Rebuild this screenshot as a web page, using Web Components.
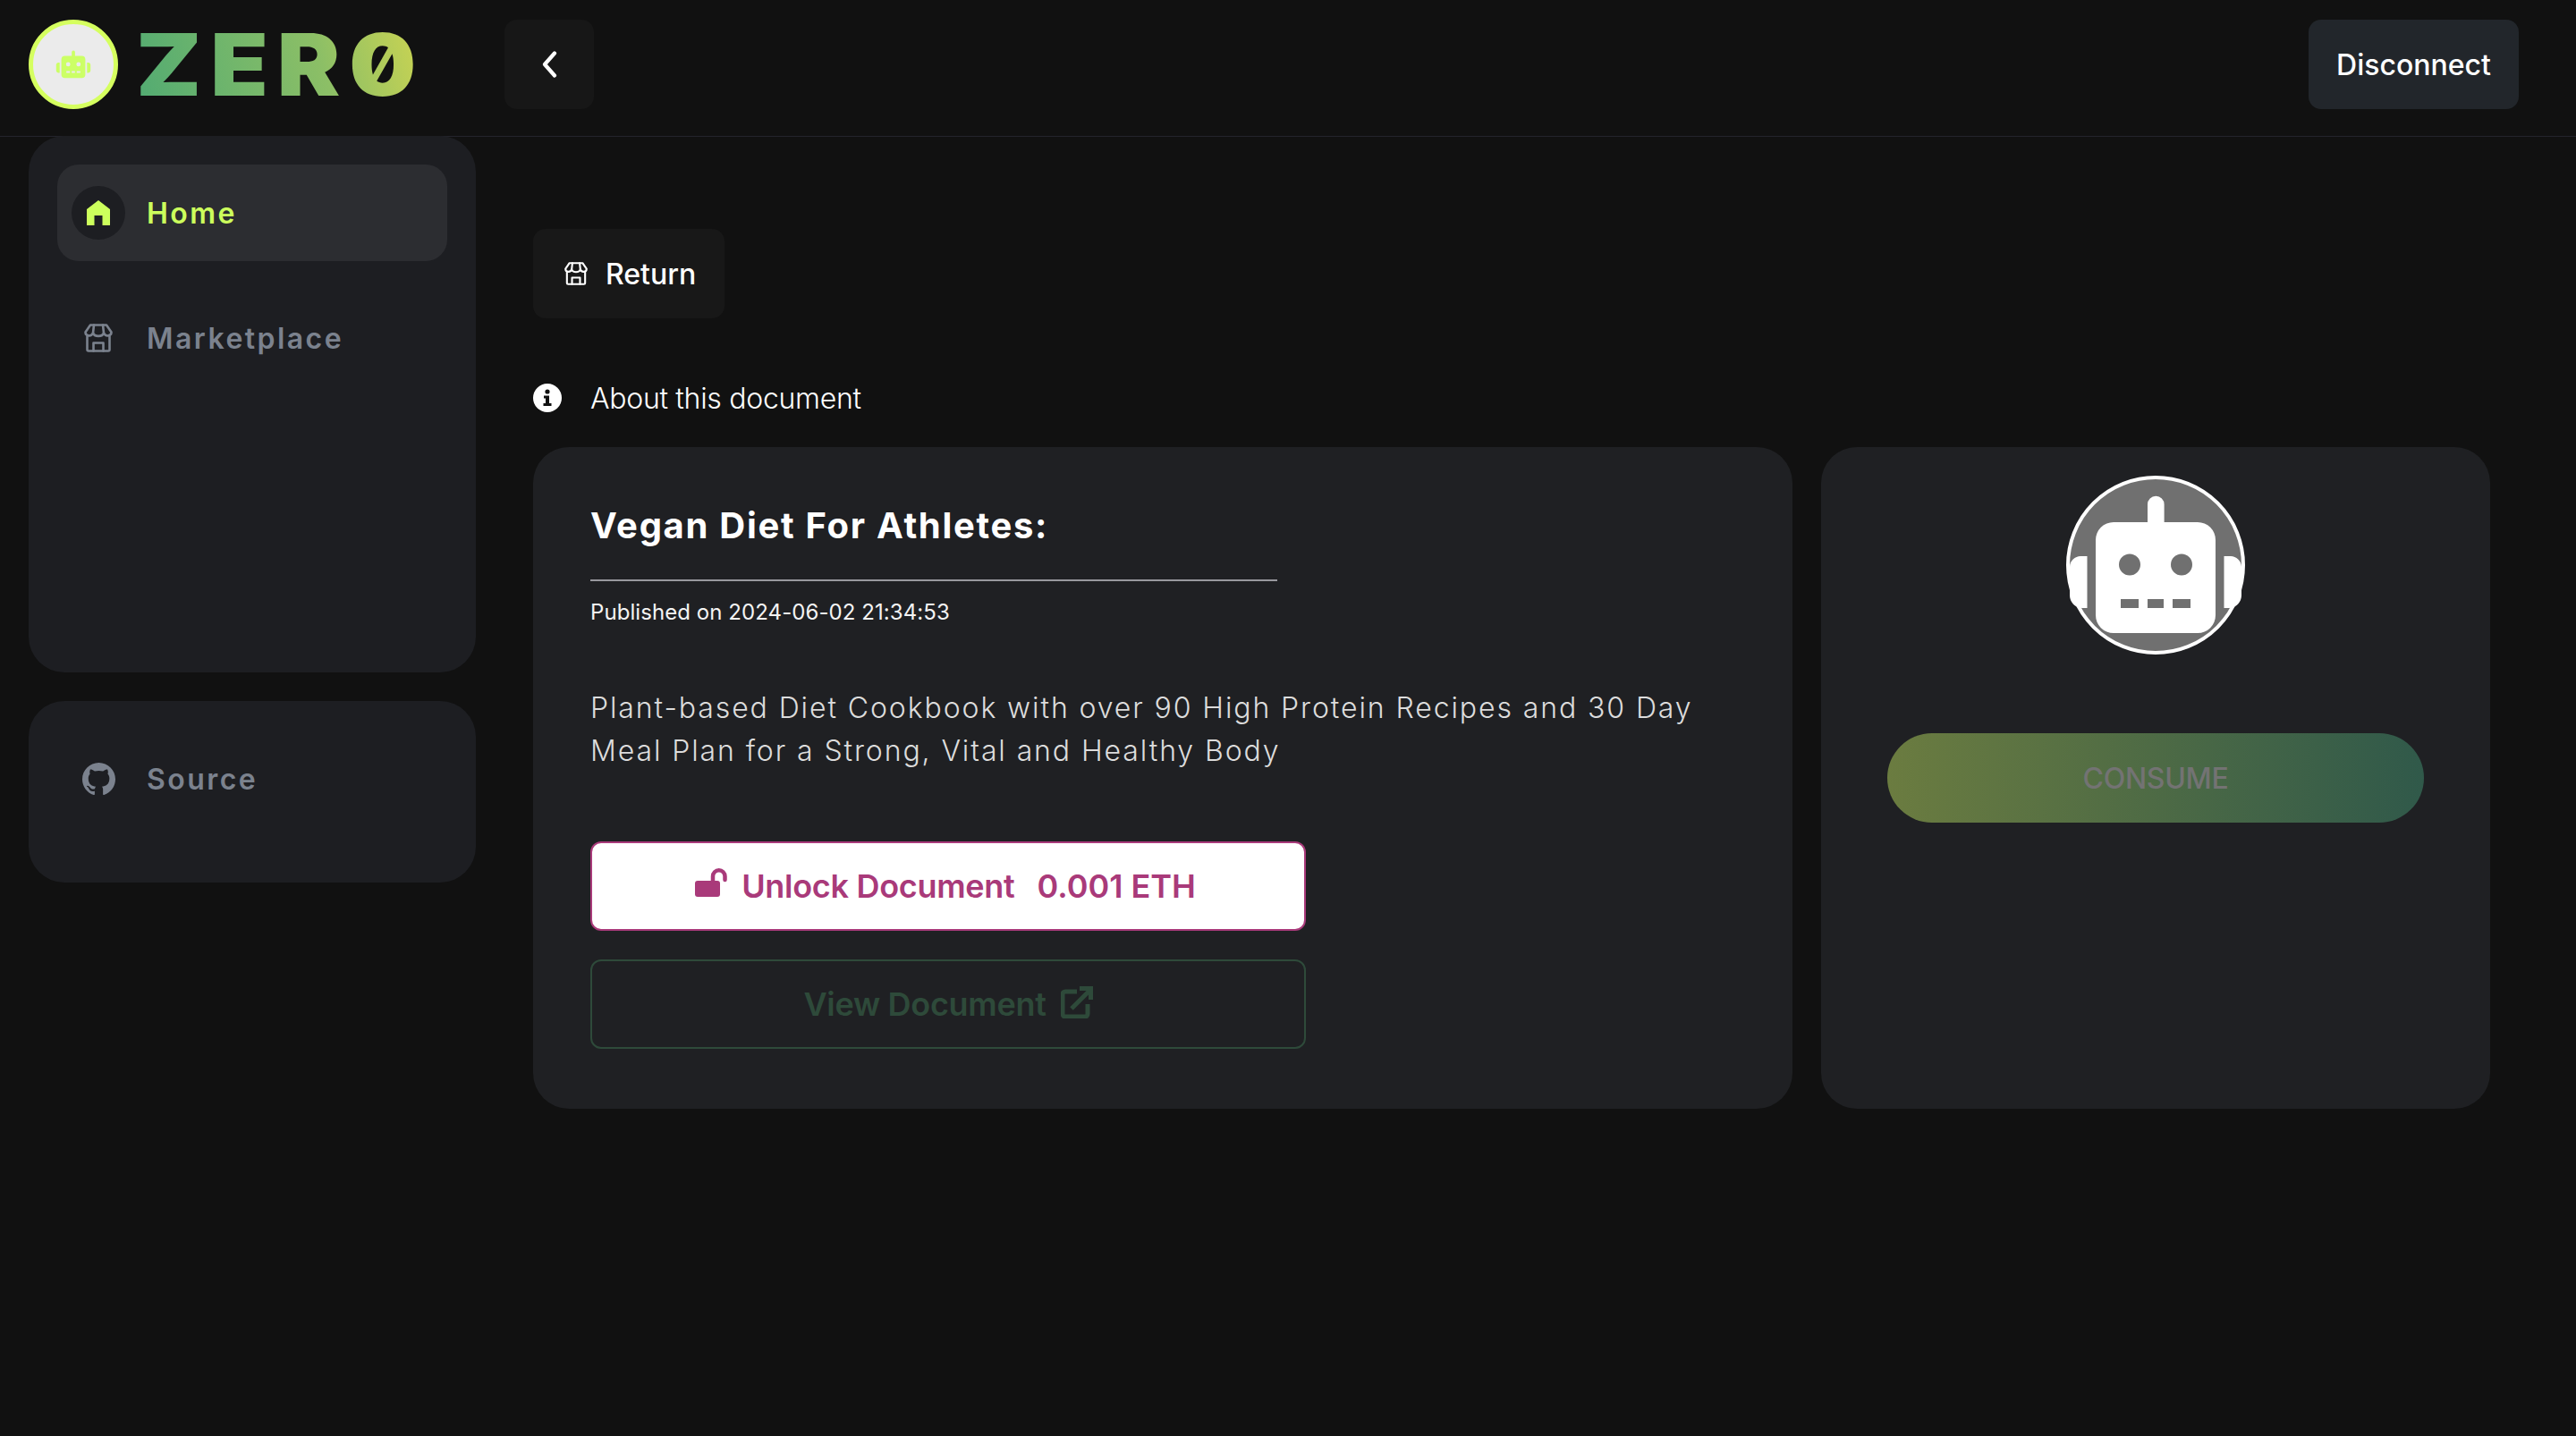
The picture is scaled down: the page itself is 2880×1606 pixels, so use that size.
<!DOCTYPE html>
<html lang="en">
<head>
<meta charset="utf-8">
<title>Zero</title>
<style>
  html, body { margin: 0; height: 100%; background: #111111; }
  body { font-family: Inter, "Noto Sans", sans-serif; color: #fff; }
</style>
</head>
<body>
<svg width="0" height="0" style="position:absolute">
  <defs>
    <symbol id="robot" viewBox="0 0 200 200">
      <path fill="currentColor" fill-rule="evenodd" d="M53 52H91V32a9.300 9.300 0 0 1 18.600 0V52H147a20 20 0 0 1 20 20V156a20 20 0 0 1-20 20H53a20 20 0 0 1-20-20V72a20 20 0 0 1 20-20ZM61 138v10H81V138ZM91 138v10H109V138ZM119 138v10H139V138Z"/>
      <circle cx="71" cy="99.500" r="12" fill="var(--eye, #707070)"/>
      <circle cx="129" cy="99.500" r="12" fill="var(--eye, #707070)"/>
      <path fill="currentColor" d="M23.500 90V148H18C10 148 4 141 4 134V102C4 95 10 90 16 90ZM176.500 90V148H182C190 148 196 141 196 134V102C196 95 190 90 184 90Z"/>
    </symbol>
    <symbol id="store" viewBox="0 0 32 32">
      <g fill="none" stroke="currentColor" stroke-width="2.600" stroke-linejoin="round" stroke-linecap="round">
        <path d="M7 1.500H25L30.500 9.500C30.500 14 24 15 22 10.500C20.500 15 11.500 15 10 10.500C8 15 1.500 14 1.500 9.500Z"/>
        <path d="M11 1.500L10 10.500M21 1.500L22 10.500"/>
        <path d="M3.500 14V29a1.500 1.500 0 0 0 1.500 1.500H27a1.500 1.500 0 0 0 1.500-1.500V14"/>
        <path d="M10.500 30.500V21.500H21.500V30.500"/>
      </g>
    </symbol>
  </defs>
</svg>

<template id="tpl-item">
  <style>
    :host { display: flex; align-items: center; height: 108px; padding-left: 16px; border-radius: 24px; color: #7b828e; font-size: 32px; font-weight: 600; letter-spacing: 2.450px; }
    :host([active]) { background: #2c2d31; color: #ccff5c; }
    .ic { width: 60px; height: 60px; border-radius: 50%; display: flex; align-items: center; justify-content: center; margin-right: 24px; flex: none; }
    :host([active]) .ic { background: #1d1e22; }
  </style>
  <span class="ic"><slot name="icon"></slot></span>
  <slot></slot>
</template>

<template id="tpl-card">
  <style>
    :host { display: block; background: #1d1e22; border-radius: 40px; padding: 32px; box-sizing: border-box; }
  </style>
  <slot></slot>
</template>

<template id="tpl-top">
  <style>
    :host { display: flex; align-items: center; border-bottom: 1px solid #24242c; padding: 0 64px 8px 32px; height: 144px; }
    .circle { width: 100px; height: 100px; box-sizing: border-box; border: 5px solid #d5ff5f; border-radius: 50%; background: #ebebeb; display: flex; align-items: center; justify-content: center; color: #ccff66; --eye: #ebebeb; }
    .word { margin-left: 20px; width: 312px; height: 72px; line-height: 72px; font-weight: 900; font-size: 96px; letter-spacing: 9px; font-feature-settings: "zero" 1; background: linear-gradient(75deg, #52ab72 0%, #8cbf66 60%, #c5d254 90%); -webkit-background-clip: text; background-clip: text; color: transparent; white-space: nowrap; flex: none; transform: scaleX(1.1); transform-origin: left center; }
    .back { margin-left: 100px; width: 100px; height: 100px; border-radius: 14px; background: #171717; display: flex; align-items: center; justify-content: center; }
    .dis { margin-left: auto; width: 235px; height: 100px; background: #22262b; border-radius: 14px; display: flex; align-items: center; justify-content: center; font-size: 32px; font-weight: 500; }
  </style>
  <span class="circle"><svg width="40" height="40"><use href="#robot"/></svg></span>
  <span class="word">ZER0</span>
  <span class="back"><svg width="18" height="30" viewBox="0 0 18 30"><path d="M15 2.500L4 15L15 27.500" fill="none" stroke="#fff" stroke-width="4.200" stroke-linecap="round" stroke-linejoin="round"/></svg></span>
  <span class="dis">Disconnect</span>
</template>

<template id="tpl-doc">
  <style>
    :host { display: block; background: #1f2023; border-radius: 40px; padding: 62px 64px 0; box-sizing: border-box; height: 740px; }
    h2 { margin: 0; font-size: 40px; line-height: 52px; font-weight: 700; letter-spacing: 1.700px; }
    hr { margin: 34px 0 0; width: 768px; border: 0; height: 2px; background: #98989e; }
    .date { margin-top: 19px; font-size: 24px; line-height: 32px; font-weight: 400; color: #f4f4f4; letter-spacing: .07px; }
    p { margin: 67px 0 0; font-size: 32px; line-height: 48px; font-weight: 300; letter-spacing: 1.900px; color: #dcdcdc; width: 1280px; }
    .btn { display: flex; align-items: center; justify-content: center; box-sizing: border-box; width: 800px; height: 100px; border-radius: 12px; font-size: 36px; font-weight: 600; letter-spacing: -.3px; }
    .unlock { margin-top: 77px; padding-right: 6px; background: #fff; border: 2px solid #a93a7a; color: #a93a7a; }
    .unlock svg { margin-right: 16px; margin-top: -8px; }
    .unlock span + span { margin-left: 25px; letter-spacing: 0; }
    .view { margin-top: 32px; border: 2px solid #2e4a3a; color: #2e4a3a; }
    .view svg { margin-left: 16px; margin-top: -4px; }
  </style>
  <h2>Vegan Diet For Athletes:</h2>
  <hr>
  <div class="date">Published on 2024-06-02 21:34:53</div>
  <p>Plant-based Diet Cookbook with over 90 High Protein Recipes and 30 Day Meal Plan for a Strong, Vital and Healthy Body</p>
  <div class="btn unlock">
    <svg width="36" height="32" viewBox="0 0 36 32"><rect x="0" y="14" width="28" height="18" rx="3" fill="currentColor"/><path d="M20 16V9a6.500 6.500 0 0 1 13.500 0V13" fill="none" stroke="currentColor" stroke-width="4.500" stroke-linecap="round"/></svg>
    <span>Unlock Document</span><span>0.001 ETH</span>
  </div>
  <div class="btn view">
    <span>View Document</span>
    <svg width="36" height="36" viewBox="0 0 36 36" fill="none" stroke="currentColor" stroke-width="5"><path d="M18 6H5a3 3 0 0 0-3 3V31a3 3 0 0 0 3 3H27a3 3 0 0 0 3-3V20"/><path d="M12 25L32 5"/><path d="M21 2.500H33.500V15"/></svg>
  </div>
</template>

<template id="tpl-agent">
  <style>
    :host { display: flex; flex-direction: column; align-items: center; background: #1f2023; border-radius: 40px; padding-top: 32px; box-sizing: border-box; height: 740px; }
    .av { width: 200px; height: 200px; box-sizing: border-box; border: 4px solid #fff; border-radius: 50%; background: #707070; color: #fff; position: relative; }
    .av svg { position: absolute; left: -4px; top: -4px; width: 200px; height: 200px; overflow: visible; }
    .go { margin-top: 88px; width: 600px; height: 100px; border-radius: 50px; background: linear-gradient(90deg, #6b7c40 0%, #30594a 100%); color: #737373; display: flex; align-items: center; justify-content: center; font-size: 32px; font-weight: 500; letter-spacing: -.3px; }
  </style>
  <div class="av"><svg><use href="#robot"/></svg></div>
  <div class="go">CONSUME</div>
</template>

<template id="tpl-app">
  <style>
    :host { display: block; min-height: 100vh; }
    .body { display: flex; margin-top: -1px; position: relative; }
    aside { width: 500px; margin-left: 32px; flex: none; display: flex; flex-direction: column; gap: 32px; }
    main { margin-left: 64px; padding-top: 104px; width: 2188px; }
    .ret { display: inline-flex; align-items: center; width: 214px; height: 100px; box-sizing: border-box; padding-left: 35px; background: #181818; border-radius: 14px; font-size: 32px; font-weight: 500; gap: 20px; }
    .about { display: flex; align-items: center; margin-top: 62px; height: 54px; font-size: 32px; font-weight: 300; gap: 32px; letter-spacing: -.3px; }
    .cards { display: flex; gap: 32px; margin-top: 28px; }
    zero-doc { width: 1408px; }
    zero-agent { width: 748px; }
    .s1 { height: 600px; }
    .s2 { height: 203px; padding-top: 33px; }
    .sp { height: 32px; }
  </style>
  <zero-top></zero-top>
  <div class="body">
    <aside>
      <zero-card class="s1">
        <zero-item active>
          <svg slot="icon" width="26" height="28" viewBox="0 0 26 28"><path fill="#ccff5c" fill-rule="evenodd" d="M13 0L26 10V28H17.500V17H8.500V28H0V10Z"/></svg>
          Home
        </zero-item>
        <div class="sp"></div>
        <zero-item>
          <svg slot="icon" width="32" height="32"><use href="#store"/></svg>
          Marketplace
        </zero-item>
      </zero-card>
      <zero-card class="s2">
        <zero-item>
          <svg slot="icon" width="37" height="37" viewBox="0 0 16 16"><path fill="currentColor" d="M8 0C3.580 0 0 3.580 0 8c0 3.540 2.290 6.530 5.470 7.590.4.070.55-.17.55-.38 0-.19-.01-.82-.01-1.490-2.010.37-2.530-.49-2.690-.94-.09-.23-.48-.94-.82-1.130-.28-.15-.68-.52-.01-.53.63-.01 1.080.58 1.230.82.72 1.210 1.870.87 2.330.66.07-.52.28-.87.51-1.070-1.780-.2-3.640-.89-3.640-3.950 0-.87.31-1.590.82-2.150-.08-.2-.36-1.020.08-2.120 0 0 .67-.21 2.200.82.64-.18 1.320-.27 2-.27.68 0 1.360.09 2 .27 1.530-1.040 2.200-.82 2.200-.82.44 1.100.16 1.920.08 2.120.51.56.82 1.270.82 2.150 0 3.070-1.870 3.750-3.650 3.950.29.25.54.73.54 1.480 0 1.070-.01 1.930-.01 2.200 0 .21.15.46.55.38A8.013 8.013 0 0016 8c0-4.420-3.580-8-8-8z"/></svg>
          Source
        </zero-item>
      </zero-card>
    </aside>
    <main>
      <div class="ret"><svg width="26" height="26"><use href="#store"/></svg>Return</div>
      <div class="about">
        <svg width="32" height="32" viewBox="0 0 32 32"><circle cx="16" cy="16" r="16" fill="#fff"/><circle cx="16" cy="9" r="2.600" fill="#111"/><path fill="#111" d="M12 13.500H18V22H20.500V25H11.500V22H14V16.500H12Z"/></svg>
        About this document
      </div>
      <div class="cards">
        <zero-doc></zero-doc>
        <zero-agent></zero-agent>
      </div>
    </main>
  </div>
</template>

<script>
  function reg(tag, tplId) {
    customElements.define(tag, class extends HTMLElement {
      constructor() {
        super();
        this.attachShadow({ mode: 'open' });
        this.shadowRoot.appendChild(document.getElementById(tplId).content.cloneNode(true));
        // <use href> can't see ids across shadow roots, so the symbols get inlined here
        this.shadowRoot.querySelectorAll('use').forEach(u => {
          const sym = document.querySelector(u.getAttribute('href'));
          const svg = u.parentNode;
          svg.setAttribute('viewBox', sym.getAttribute('viewBox'));
          svg.innerHTML = sym.innerHTML;
        });
      }
    });
  }
  reg('zero-item', 'tpl-item');
  reg('zero-card', 'tpl-card');
  reg('zero-top', 'tpl-top');
  reg('zero-doc', 'tpl-doc');
  reg('zero-agent', 'tpl-agent');
  reg('zero-app', 'tpl-app');
</script>
<zero-app></zero-app>
</body>
</html>
